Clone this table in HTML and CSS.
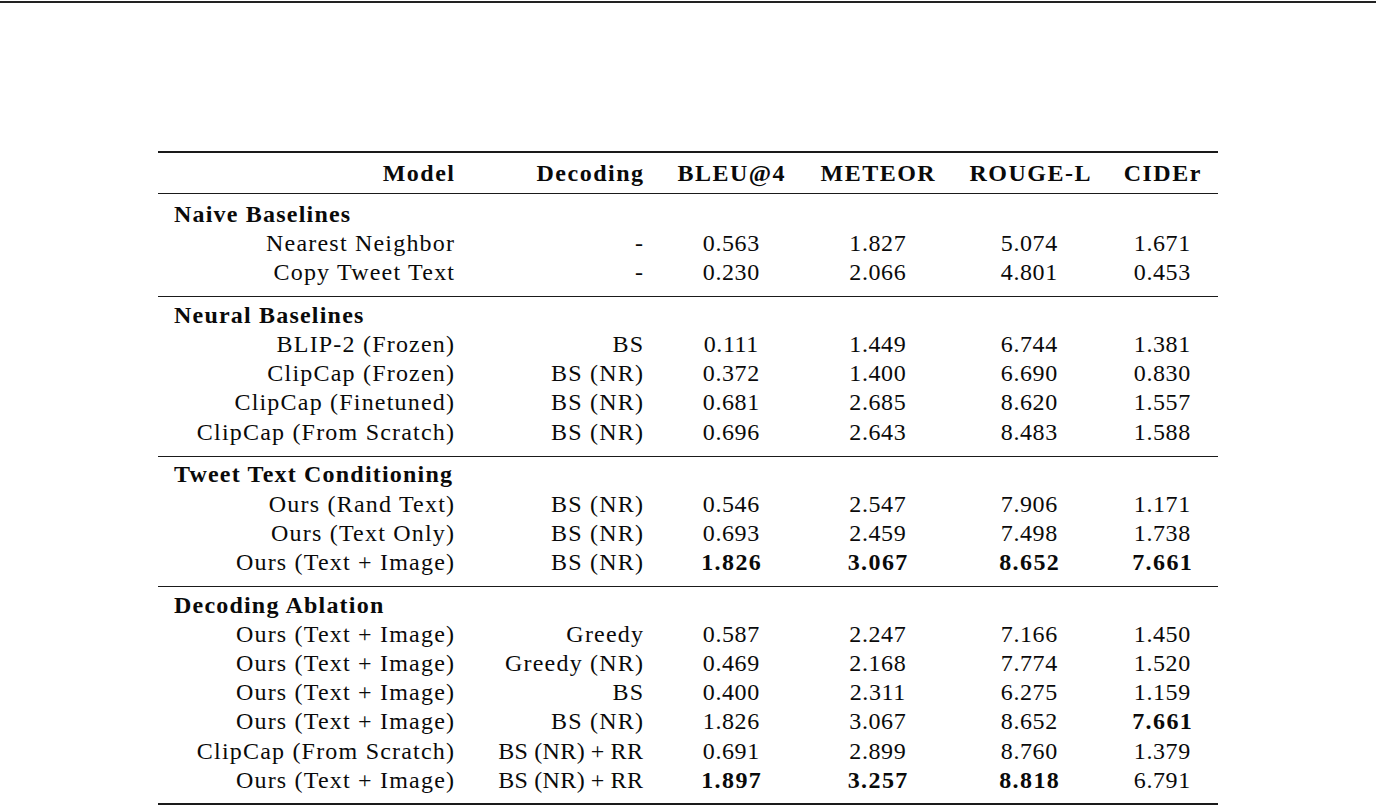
FILE: index.html
```html
<!DOCTYPE html>
<html lang="en">
<head>
<meta charset="utf-8">
<title>Results table</title>
<link rel="stylesheet" href="styles.css">
</head>
<body>
<div class="topline"></div>
<table class="results">
  <colgroup>
    <col class="c-model">
    <col class="c-dec">
    <col class="c-bleu">
    <col class="c-met">
    <col class="c-rouge">
    <col class="c-cider">
  </colgroup>
  <thead>
    <tr>
      <th class="r">Model</th>
      <th class="r">Decoding</th>
      <th>BLEU@4</th>
      <th>METEOR</th>
      <th>ROUGE-L</th>
      <th>CIDEr</th>
    </tr>
  </thead>
  <tbody class="start">
    <tr class="first"><td class="group" colspan="6">Naive Baselines</td></tr>
    <tr><td class="r">Nearest Neighbor</td><td class="r">-</td><td>0.563</td><td>1.827</td><td>5.074</td><td>1.671</td></tr>
    <tr class="last"><td class="r">Copy Tweet Text</td><td class="r">-</td><td>0.230</td><td>2.066</td><td>4.801</td><td>0.453</td></tr>
  </tbody>
  <tbody>
    <tr class="first"><td class="group" colspan="6">Neural Baselines</td></tr>
    <tr><td class="r">BLIP-2 (Frozen)</td><td class="r">BS</td><td>0.111</td><td>1.449</td><td>6.744</td><td>1.381</td></tr>
    <tr><td class="r">ClipCap (Frozen)</td><td class="r">BS (NR)</td><td>0.372</td><td>1.400</td><td>6.690</td><td>0.830</td></tr>
    <tr><td class="r">ClipCap (Finetuned)</td><td class="r">BS (NR)</td><td>0.681</td><td>2.685</td><td>8.620</td><td>1.557</td></tr>
    <tr class="last"><td class="r">ClipCap (From Scratch)</td><td class="r">BS (NR)</td><td>0.696</td><td>2.643</td><td>8.483</td><td>1.588</td></tr>
  </tbody>
  <tbody>
    <tr class="first"><td class="group" colspan="6">Tweet Text Conditioning</td></tr>
    <tr><td class="r">Ours (Rand Text)</td><td class="r">BS (NR)</td><td>0.546</td><td>2.547</td><td>7.906</td><td>1.171</td></tr>
    <tr><td class="r">Ours (Text Only)</td><td class="r">BS (NR)</td><td>0.693</td><td>2.459</td><td>7.498</td><td>1.738</td></tr>
    <tr class="last"><td class="r">Ours (Text + Image)</td><td class="r">BS (NR)</td><td class="b">1.826</td><td class="b">3.067</td><td class="b">8.652</td><td class="b">7.661</td></tr>
  </tbody>
  <tbody class="end">
    <tr class="first"><td class="group" colspan="6">Decoding Ablation</td></tr>
    <tr><td class="r">Ours (Text + Image)</td><td class="r">Greedy</td><td>0.587</td><td>2.247</td><td>7.166</td><td>1.450</td></tr>
    <tr><td class="r">Ours (Text + Image)</td><td class="r">Greedy (NR)</td><td>0.469</td><td>2.168</td><td>7.774</td><td>1.520</td></tr>
    <tr><td class="r">Ours (Text + Image)</td><td class="r">BS</td><td>0.400</td><td>2.311</td><td>6.275</td><td>1.159</td></tr>
    <tr><td class="r">Ours (Text + Image)</td><td class="r">BS (NR)</td><td>1.826</td><td>3.067</td><td>8.652</td><td class="b">7.661</td></tr>
    <tr><td class="r">ClipCap (From Scratch)</td><td class="r tight">BS (NR) + RR</td><td>0.691</td><td>2.899</td><td>8.760</td><td>1.379</td></tr>
    <tr class="last"><td class="r">Ours (Text + Image)</td><td class="r tight">BS (NR) + RR</td><td class="b">1.897</td><td class="b">3.257</td><td class="b">8.818</td><td>6.791</td></tr>
  </tbody>
</table>
</body>
</html>
```

FILE: styles.css
```css
html, body {
  margin: 0;
  padding: 0;
  background: #ffffff;
}

body {
  font-family: "Liberation Serif", "Times New Roman", serif;
  color: #0a0a0a;
  font-size: 24px;
}

.topline {
  margin-top: 1px;
  height: 2px;
  background: #222222;
}

.results {
  width: 1060px;
  margin: 148px auto 0;
  border-collapse: collapse;
  table-layout: fixed;
}

.c-model { width: 312px; }
.c-dec { width: 189px; }
.c-bleu { width: 144px; }
.c-met { width: 149px; }
.c-rouge { width: 154px; }
.c-cider { width: 112px; }

.results th,
.results td {
  padding: 0 16px 0 16.6px;
  line-height: 29.2px;
  text-align: center;
  white-space: nowrap;
  vertical-align: top;
  letter-spacing: 0.6px;
}

.results th {
  font-weight: bold;
  letter-spacing: 1.5px;
  padding-left: 17.5px;
}

.results .r {
  text-align: right;
  letter-spacing: 1.2px;
  padding-left: 16px;
  padding-right: 14.8px;
}

.results td.tight {
  letter-spacing: 0.4px;
  word-spacing: -0.6px;
  padding-right: 15.6px;
}

.results th.r {
  letter-spacing: 1.5px;
  padding-right: 14.5px;
}

.results td.b {
  font-weight: bold;
  letter-spacing: 1.4px;
  padding-left: 17.4px;
}

.results td.group {
  text-align: left;
  font-weight: bold;
  letter-spacing: 1.2px;
  padding-left: 16px;
}

.results thead tr {
  border-top: 2px solid #1a1a1a;
  border-bottom: 1px solid #1a1a1a;
}

.results thead th {
  padding-top: 6px;
  padding-bottom: 5px;
}

.results tbody + tbody {
  border-top: 1px solid #1a1a1a;
}

.results tbody.end {
  border-bottom: 2px solid #1a1a1a;
}

.results tr.first td {
  padding-top: 3.5px;
}

.results tbody.start tr.first td {
  padding-top: 5.5px;
}

.results tr.last td {
  padding-bottom: 9px;
}

.results tbody.end tr.last td {
  padding-bottom: 8px;
}
```
